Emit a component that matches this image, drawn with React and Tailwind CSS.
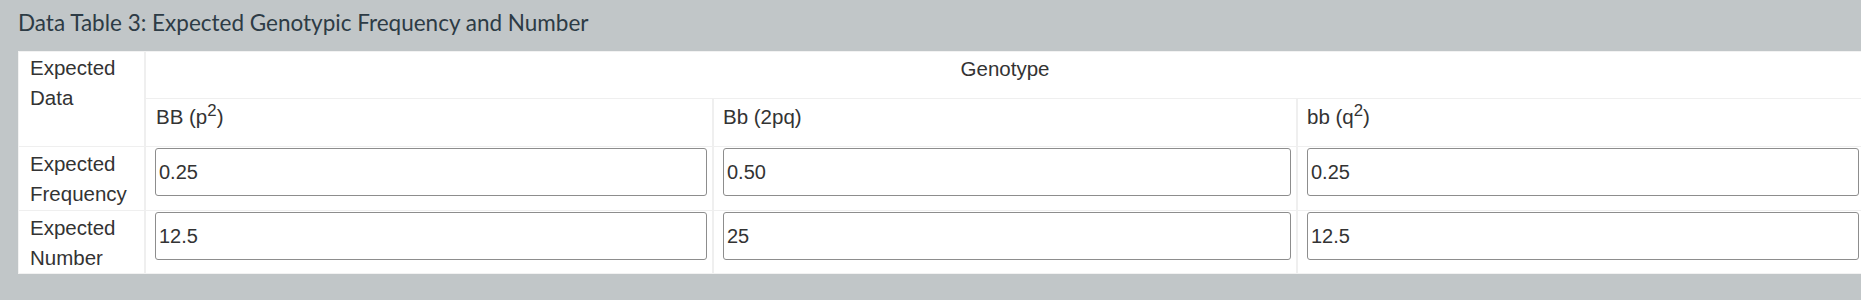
import React from "react";

const rows = [
  { label: ["Expected", "Frequency"], values: ["0.25", "0.50", "0.25"] },
  { label: ["Expected", "Number"], values: ["12.5", "25", "12.5"] },
];

const cell = "text-[20.5px] leading-[30px] text-[#333333]";

const Sup = ({ children }) => (
  <sup className="relative top-[-0.45em] text-[0.82em] leading-none">{children}</sup>
);

const App = () => {
  return (
    <div
      className="w-full min-h-[300px] overflow-hidden bg-[#c1c6c8]"
      style={{ fontFamily: "'Liberation Sans', Arial, sans-serif" }}
    >
      {/* Title */}
      <h2 className="pt-[9px] pl-[18px] mb-[15px] font-['Lato',sans-serif] text-[22.5px] leading-[27px] font-normal text-[#2d3b45] whitespace-nowrap">
        Data Table 3: Expected Genotypic Frequency and Number
      </h2>

      {/* Table */}
      <div className="ml-[18px] w-[1846px] bg-white border border-[#f2f2f2]">
        <div className="grid grid-cols-[125px_568px_584px_568px] grid-rows-[46px_48px_64px_63px]">
          <div className={`${cell} row-span-2 pl-[11px] pt-[1px]`}>
            Expected
            <br />
            Data
          </div>
          <div className={`${cell} col-span-3 border-l-2 border-[#efefef] pt-[2px] text-center`}>
            Genotype
          </div>

          <div className={`${cell} border-l-2 border-t border-[#efefef] pl-[10px] pt-[3px]`}>
            BB (p<Sup>2</Sup>)
          </div>
          <div className={`${cell} border-l-2 border-t border-[#efefef] pl-[9px] pt-[3px]`}>
            Bb (2pq)
          </div>
          <div className={`${cell} border-l-2 border-t border-[#efefef] pl-[9px] pt-[3px]`}>
            bb (q<Sup>2</Sup>)
          </div>

          {rows.map((row, i) => (
            <React.Fragment key={i}>
              <div className={`${cell} border-t border-[#efefef] pl-[11px] pt-[2px]`}>
                {row.label[0]}
                <br />
                {row.label[1]}
              </div>
              {row.values.map((v, j) => (
                <div
                  key={j}
                  className="border-l-2 border-t border-[#efefef] pl-[9px] pr-[5px] pt-[1px]"
                >
                  <input
                    type="text"
                    readOnly
                    value={v}
                    className="block w-full h-[48px] px-[3px] bg-white border border-[#8d8d8d] rounded-[3px] text-[20px] text-[#333333] font-['Liberation_Sans',Arial,sans-serif] outline-none"
                  />
                </div>
              ))}
            </React.Fragment>
          ))}
        </div>
      </div>
    </div>
  );
};

export default App;
